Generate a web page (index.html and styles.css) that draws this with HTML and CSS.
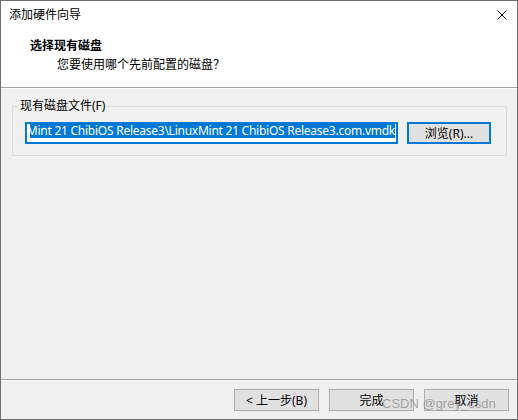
FILE: index.html
```html
<!DOCTYPE html>
<html lang="zh-CN">

<head>
	<meta charset="UTF-8">
	<meta name="viewport" content="width=device-width, initial-scale=1.0">
	<title>添加硬件向导</title>
	<link rel="stylesheet" href="styles.css">
</head>

<body>

	<div class="wizard">
		<div class="wizard-header">
			<div class="title-bar">
				<span class="title">添加硬件向导</span>
				<svg class="close" width="10" height="10" viewBox="0 0 10 10">
					<path d="M0.5 0.5L9.5 9.5M9.5 0.5L0.5 9.5" stroke="#000" stroke-width="1" fill="none" />
				</svg>
			</div>
			<div class="page-title">选择现有磁盘</div>
			<div class="page-desc">您要使用哪个先前配置的磁盘？</div>
		</div>

		<div class="wizard-body">
			<fieldset class="group">
				<legend>现有磁盘文件(F)</legend>
				<div class="file-row">
					<div class="path-box">
						<div class="path-clip">
							<span class="path-sel">D:\Virtual Machines\LinuxMint 21 ChibiOS Release3\LinuxMint 21 ChibiOS Release3.com.vmdk</span>
						</div>
					</div>
					<button class="btn btn-browse" type="button">浏览(R)...</button>
				</div>
			</fieldset>
		</div>

		<div class="wizard-footer">
			<button class="btn" type="button">&lt; 上一步(B)</button>
			<button class="btn" type="button">完成</button>
			<button class="btn" type="button">取消</button>
		</div>

		<div class="watermark">CSDN @grey_csdn</div>
	</div>

</body>
</html>
```

FILE: styles.css
```css
body {
	margin: 0;
	padding: 0;
	background-color: #f0f0f0;
	font-family: "Noto Sans", "Noto Sans CJK SC", sans-serif;
	font-size: 12px;
	color: #000;
}

/* Dialog frame */
.wizard {
	position: relative;
	width: 518px;
	height: 420px;
	box-sizing: border-box;
	border: 1px solid #6f6f6f;
	display: flex;
	flex-direction: column;
	background-color: #f0f0f0;
}

/* White header strip */
.wizard-header {
	height: 86px;
	background-color: #ffffff;
	border-bottom: 1px solid #a0a0a0;
}

.title-bar {
	display: flex;
	justify-content: space-between;
	align-items: center;
	height: 16px;
	padding: 6px 10px 0 8px;
	line-height: 16px;
}

.close {
	display: block;
}

.page-title {
	margin: 15px 0 0 29px;
	line-height: 16px;
	font-weight: bold;
}

.page-desc {
	margin: 3px 0 0 56px;
	line-height: 16px;
}

/* Body */
.wizard-body {
	flex: 1;
	border-top: 1px solid #ffffff;
}

.group {
	margin: 9px 10px 0 11px;
	padding: 0;
	border: 1px solid #dcdcdc;
	min-inline-size: 0;
}

.group legend {
	margin-left: 5px;
	padding: 0 2px;
	line-height: 16px;
}

.file-row {
	display: flex;
	gap: 9px;
	margin: 8px 12px 11px 12px;
}

.path-box {
	width: 373px;
	height: 22px;
	box-sizing: border-box;
	border: 2px solid #0078d7;
	background-color: #ffffff;
	padding: 0 1px 0 3px;
	display: flex;
}

.path-clip {
	flex: 1;
	display: flex;
	justify-content: flex-end;
	overflow: hidden;
}

.path-sel {
	flex-shrink: 0;
	white-space: nowrap;
	line-height: 14px;
	height: 14px;
	letter-spacing: -0.25px;
	background-color: #0078d7;
	color: #ffffff;
}

.btn {
	width: 85px;
	height: 22px;
	box-sizing: border-box;
	padding: 0;
	border: 1px solid #adadad;
	background-color: #e1e1e1;
	font-family: inherit;
	font-size: 12px;
	color: #000;
}

.btn-browse {
	width: 84px;
	border: 2px solid #0078d7;
}

/* Bottom button bar */
.wizard-footer {
	display: flex;
	justify-content: flex-end;
	gap: 10px;
	padding: 9px 8px 8px 0;
	border-top: 1px solid #a0a0a0;
	box-shadow: inset 0 1px 0 #ffffff;
}

.watermark {
	position: absolute;
	left: 381px;
	top: 395px;
	font-family: "Liberation Sans", Arial, sans-serif;
	font-size: 13px;
	line-height: 15px;
	color: rgba(130, 130, 130, 0.7);
	pointer-events: none;
}
```
